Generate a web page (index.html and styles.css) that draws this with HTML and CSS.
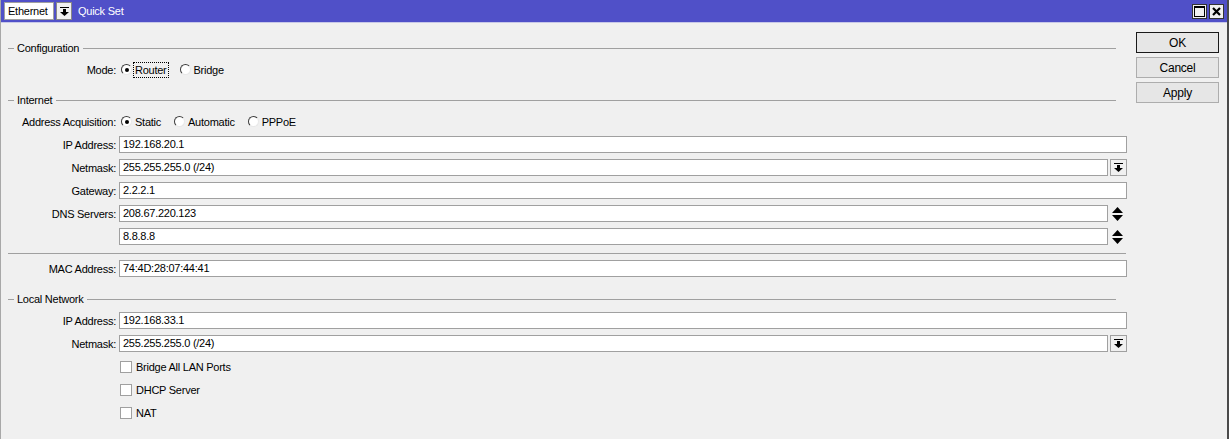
FILE: index.html
```html
<!DOCTYPE html>
<html>
<head>
<meta charset="utf-8">
<title>Quick Set</title>
<link rel="stylesheet" href="styles.css">
</head>
<body>
<div class="window">
  <div class="titlebar">
    <div class="mode-select">Ethernet</div>
    <div class="drop-btn small">
      <svg width="9" height="9" viewBox="0 0 9 9"><rect x="0" y="0" width="9" height="1" fill="#000"/><rect x="3" y="2" width="3" height="3" fill="#000"/><polygon points="0,5 9,5 4.5,9" fill="#000"/></svg>
    </div>
    <div class="title">Quick Set</div>
    <div class="title-spacer"></div>
    <div class="win-btn">
      <svg width="11" height="11" viewBox="0 0 11 11"><rect x="0.5" y="0.5" width="10" height="10" fill="none" stroke="#000"/><rect x="0" y="0" width="11" height="2" fill="#000"/></svg>
    </div>
    <div class="win-btn">
      <svg width="11" height="11" viewBox="0 0 11 11"><path d="M2 2 L9 9 M9 2 L2 9" stroke="#000" stroke-width="2.2"/></svg>
    </div>
  </div>

  <div class="content">
    <div class="form">
      <div class="group-head first"><span class="dash"></span><span class="gtext">Configuration</span><span class="gline"></span></div>
      <div class="row">
        <div class="label">Mode:</div>
        <div class="radios">
          <span class="radio checked"></span><span class="rlabel focus">Router</span>
          <span class="radio"></span><span class="rlabel">Bridge</span>
        </div>
      </div>

      <div class="group-head"><span class="dash"></span><span class="gtext">Internet</span><span class="gline"></span></div>
      <div class="row">
        <div class="label">Address Acquisition:</div>
        <div class="radios">
          <span class="radio checked"></span><span class="rlabel">Static</span>
          <span class="radio"></span><span class="rlabel">Automatic</span>
          <span class="radio"></span><span class="rlabel">PPPoE</span>
        </div>
      </div>
      <div class="row">
        <div class="label">IP Address:</div>
        <div class="field">192.168.20.1</div>
      </div>
      <div class="row">
        <div class="label">Netmask:</div>
        <div class="field">255.255.255.0 (/24)</div>
        <div class="drop-btn">
          <svg width="9" height="9" viewBox="0 0 9 9"><rect x="0" y="0" width="9" height="1" fill="#000"/><rect x="3" y="2" width="3" height="3" fill="#000"/><polygon points="0,5 9,5 4.5,9" fill="#000"/></svg>
        </div>
      </div>
      <div class="row">
        <div class="label">Gateway:</div>
        <div class="field">2.2.2.1</div>
      </div>
      <div class="row">
        <div class="label">DNS Servers:</div>
        <div class="field">208.67.220.123</div>
        <div class="spin">
          <svg width="11" height="14" viewBox="0 0 11 14"><polygon points="5.5,0 11,6 0,6" fill="#000"/><polygon points="0,8 11,8 5.5,14" fill="#000"/></svg>
        </div>
      </div>
      <div class="row">
        <div class="label"></div>
        <div class="field">8.8.8.8</div>
        <div class="spin">
          <svg width="11" height="14" viewBox="0 0 11 14"><polygon points="5.5,0 11,6 0,6" fill="#000"/><polygon points="0,8 11,8 5.5,14" fill="#000"/></svg>
        </div>
      </div>
      <div class="separator"></div>
      <div class="row">
        <div class="label">MAC Address:</div>
        <div class="field">74:4D:28:07:44:41</div>
      </div>

      <div class="group-head"><span class="dash"></span><span class="gtext">Local Network</span><span class="gline"></span></div>
      <div class="row">
        <div class="label">IP Address:</div>
        <div class="field">192.168.33.1</div>
      </div>
      <div class="row">
        <div class="label">Netmask:</div>
        <div class="field">255.255.255.0 (/24)</div>
        <div class="drop-btn">
          <svg width="9" height="9" viewBox="0 0 9 9"><rect x="0" y="0" width="9" height="1" fill="#000"/><rect x="3" y="2" width="3" height="3" fill="#000"/><polygon points="0,5 9,5 4.5,9" fill="#000"/></svg>
        </div>
      </div>
      <div class="row">
        <div class="label"></div>
        <span class="check"></span><span class="clabel">Bridge All LAN Ports</span>
      </div>
      <div class="row">
        <div class="label"></div>
        <span class="check"></span><span class="clabel">DHCP Server</span>
      </div>
      <div class="row">
        <div class="label"></div>
        <span class="check"></span><span class="clabel">NAT</span>
      </div>
    </div>

    <div class="buttons">
      <div class="btn default">OK</div>
      <div class="btn">Cancel</div>
      <div class="btn">Apply</div>
    </div>
  </div>
</div>
</body>
</html>
```

FILE: styles.css
```css
html, body {
  margin: 0;
  padding: 0;
  background: #f0f0f0;
}
body {
  font-family: "Liberation Sans", Arial, sans-serif;
  font-size: 11px;
  letter-spacing: -0.25px;
  color: #000;
}
.window {
  width: 1229px;
  height: 439px;
  box-sizing: border-box;
  border-left: 1px solid #a8a8a8;
  border-right: 2px solid #4a4a4a;
  background: #f0f0f0;
  overflow: hidden;
}
.titlebar {
  height: 23px;
  background: #5050c8;
  display: flex;
  align-items: center;
  padding-left: 3px;
  padding-right: 3px;
  border-bottom: 1px solid #c8c8e8;
  box-sizing: border-box;
}
.mode-select {
  width: 50px;
  height: 18px;
  box-sizing: border-box;
  background: #fff;
  border: 1px solid #a0a0a0;
  padding-left: 3px;
  line-height: 16px;
}
.drop-btn {
  width: 17px;
  height: 17px;
  box-sizing: border-box;
  border: 1px solid #a0a0a0;
  background: #f0f0f0;
  display: flex;
  align-items: center;
  justify-content: center;
  margin-left: 2px;
}
.drop-btn.small {
  height: 18px;
  width: 16px;
  border-color: #888;
}
.title {
  color: #fff;
  margin-left: 6px;
  font-size: 11px;
}
.title-spacer { flex: 1; }
.win-btn {
  width: 15px;
  height: 15px;
  box-sizing: border-box;
  border: 1px solid #333;
  background: #f0f0f0;
  display: flex;
  align-items: center;
  justify-content: center;
  margin-left: 2px;
}
.content {
  display: flex;
}
.form {
  width: 1126px;
  padding-left: 7px;
  padding-top: 15px;
  box-sizing: border-box;
}
.group-head {
  width: 1108px;
  height: 20px;
  display: flex;
  align-items: center;
  margin-top: 9px;
}
.group-head.first { margin-top: 0; }
.dash {
  width: 6px;
  height: 1px;
  background: #a0a0a0;
}
.gtext {
  margin: 0 4px 0 3px;
}
.gline {
  flex: 1;
  height: 1px;
  background: #a0a0a0;
}
.row {
  height: 23px;
  display: flex;
  align-items: center;
}
.label {
  width: 108px;
  text-align: right;
  margin-right: 3px;
  white-space: nowrap;
  flex: none;
}
.field {
  flex: 1;
  height: 17px;
  box-sizing: border-box;
  background: #fff;
  border: 1px solid #a0a0a0;
  padding-left: 3px;
  line-height: 15px;
}
.spin {
  width: 19px;
  display: flex;
  justify-content: center;
  align-items: center;
  flex: none;
}
.separator {
  height: 1px;
  background: #a0a0a0;
  margin: 5px 0 3px 0;
  width: 1118px;
}
.radios {
  display: flex;
  align-items: center;
}
.radio {
  width: 11px;
  height: 11px;
  box-sizing: border-box;
  border-radius: 50%;
  border: 1px solid;
  border-color: #3c3c3c #e8e8e8 #e8e8e8 #3c3c3c;
  background: #fff;
  display: inline-flex;
  align-items: center;
  justify-content: center;
  margin-left: 2px;
}
.radio.checked::after {
  content: "";
  width: 4px;
  height: 4px;
  border-radius: 50%;
  background: #000;
}
.rlabel {
  margin-left: 1px;
  margin-right: 9px;
  padding: 1px 1px;
  border: 1px dotted transparent;
}
.rlabel.focus {
  border-color: #000;
}
.check {
  width: 12px;
  height: 12px;
  box-sizing: border-box;
  border: 1px solid #a0a0a0;
  background: #fff;
  margin-left: 1px;
  flex: none;
}
.clabel {
  margin-left: 4px;
}
.buttons {
  margin-left: 9px;
  padding-top: 9px;
  display: flex;
  flex-direction: column;
  gap: 4px;
}
.btn {
  width: 83px;
  height: 21px;
  box-sizing: border-box;
  border: 1px solid #adadad;
  background: #e6e6e6;
  display: flex;
  align-items: center;
  justify-content: center;
  font-size: 12px;
}
.btn.default {
  border: 1px solid #1a1a1a;
}
```
